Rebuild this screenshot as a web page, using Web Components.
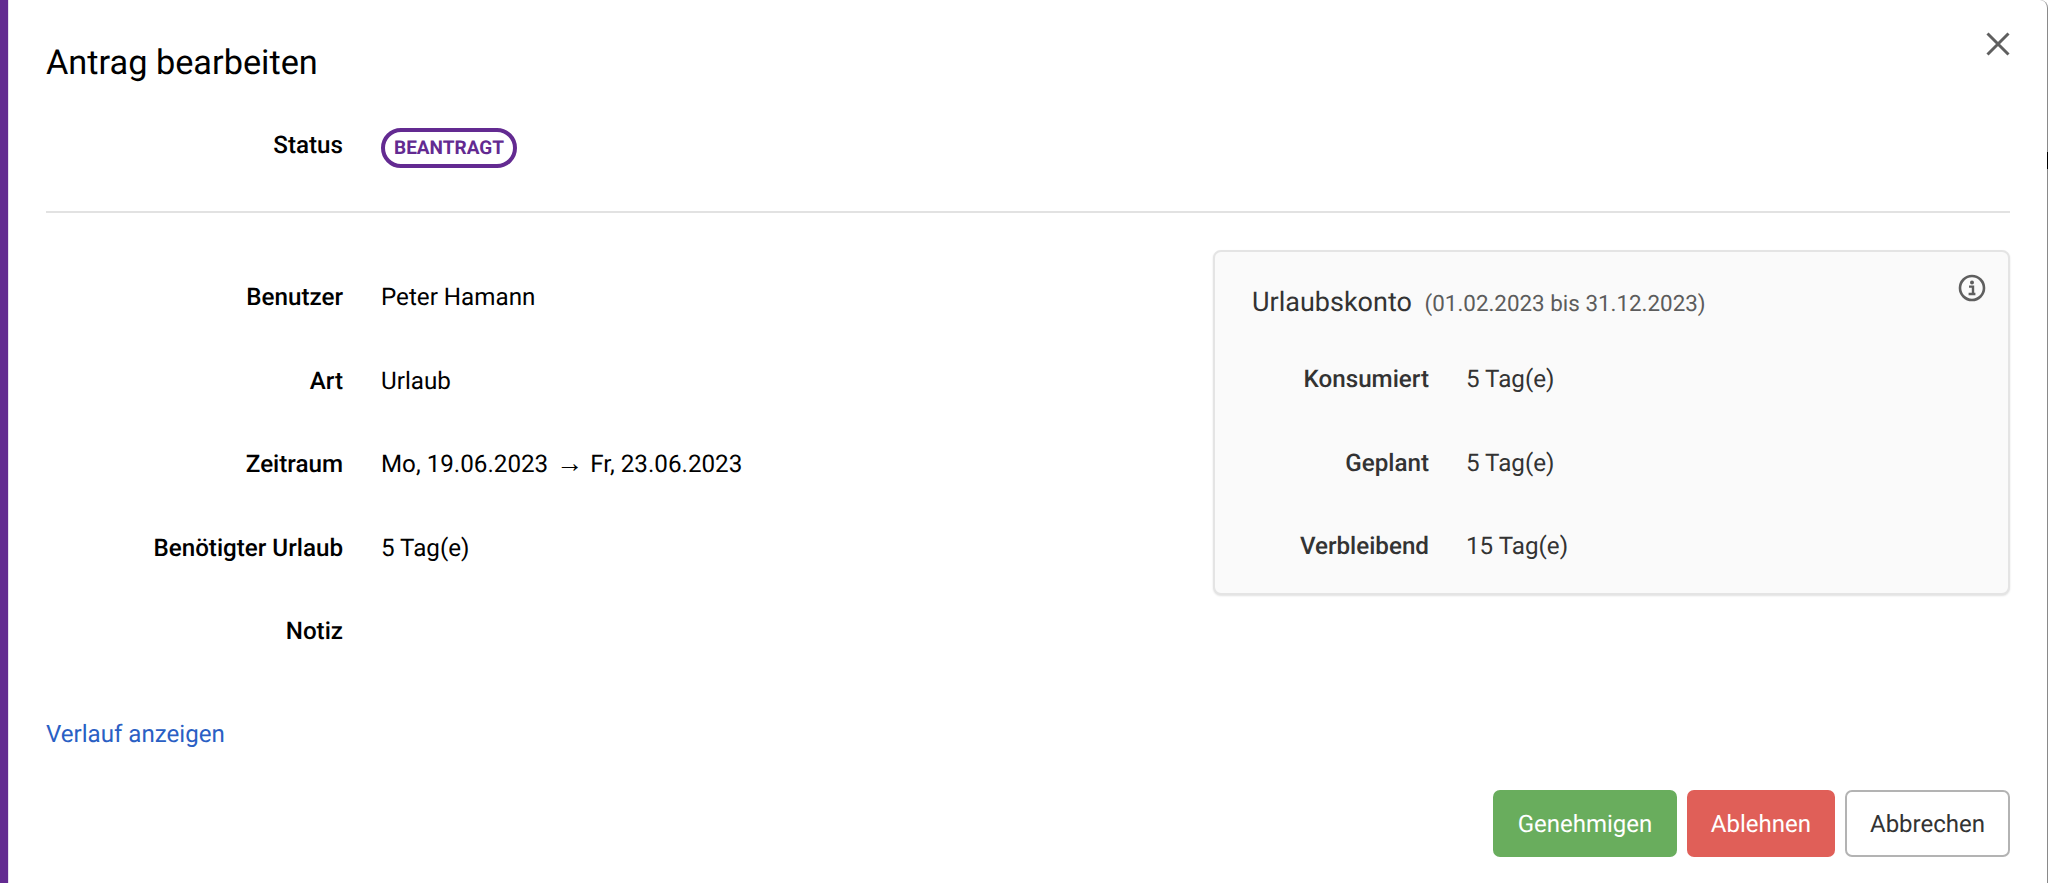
<!DOCTYPE html>
<html lang="de">
<head>
<meta charset="utf-8">
<title>Antrag bearbeiten</title>
<style>
  html, body { margin: 0; height: 100%; background: #fff; overflow: hidden; }
  body { font-family: Roboto, "Liberation Sans", sans-serif; text-rendering: geometricPrecision; }
  .arrow { font-family: "Liberation Sans", sans-serif; font-size: 27px; line-height: 1; margin: 0 1px 0 2px; }
</style>
</head>
<body>
<leave-dialog>
  <span slot="title">Antrag bearbeiten</span>
  <status-row slot="status"></status-row>
  <info-row label="Benutzer">Peter Hamann</info-row>
  <info-row label="Art">Urlaub</info-row>
  <info-row label="Zeitraum">Mo, 19.06.2023 <span class="arrow">→</span> Fr, 23.06.2023</info-row>
  <info-row label="Benötigter Urlaub">5 Tag(e)</info-row>
  <info-row label="Notiz"></info-row>
  <account-card slot="card"></account-card>
  <a slot="history" href="#">Verlauf anzeigen</a>
  <action-button slot="actions" kind="approve">Genehmigen</action-button>
  <action-button slot="actions" kind="reject">Ablehnen</action-button>
  <action-button slot="actions" kind="cancel">Abbrechen</action-button>
</leave-dialog>

<script>
class LeaveDialog extends HTMLElement {
  constructor() {
    super();
    this.attachShadow({ mode: 'open' });
    this.shadowRoot.innerHTML = `
      <style>
        :host {
          display: flex;
          flex-direction: column;
          position: relative;
          box-sizing: border-box;
          height: 883px;
          border-left: 8px solid #632a91;
          border-right: 1px solid #8a8a8a;
          border-top-right-radius: 8px;
          box-shadow: inset 1px 0 #e8dff0;
          padding: 0 37px 26px 38px;
          color: #000;
          font-size: 24px;
        }
        /* dark piece of the window behind, at the right edge */
        :host::after {
          content: "";
          position: absolute;
          top: 152px;
          right: -1px;
          width: 1px;
          height: 17px;
          background: #000;
        }
        .head {
          display: flex;
          justify-content: space-between;
          padding-top: 41px;
          height: 74px;
        }
        .title { font-size: 34.3px; line-height: 44px; }
        .close { margin-top: -9px; width: 24px; height: 24px; color: #5f5f5f; }
        .status { height: 96px; border-bottom: 2px solid #e2e2e2; }
        .body { display: flex; justify-content: space-between; padding-top: 37px; flex: 1; }
        .rows { display: flex; flex-direction: column; padding-top: 32px; }
        ::slotted(a) { color: #2a5fc4; text-decoration: none; font-size: 24.1px; }
        .foot { display: flex; align-items: flex-end; justify-content: space-between; }
        .history { margin-bottom: 109px; }
        .actions { display: flex; gap: 10px; }
      </style>
      <div class="head">
        <div class="title"><slot name="title"></slot></div>
        <svg class="close" viewBox="0 0 24 24" fill="none" stroke="currentColor" stroke-width="3"><path d="M1.5 1.5l21 21M22.5 1.5l-21 21"/></svg>
      </div>
      <div class="status"><slot name="status"></slot></div>
      <div class="body">
        <div class="rows"><slot></slot></div>
        <slot name="card"></slot>
      </div>
      <div class="foot">
        <div class="history"><slot name="history"></slot></div>
        <div class="actions"><slot name="actions"></slot></div>
      </div>
    `;
  }
}

class InfoRow extends HTMLElement {
  constructor() {
    super();
    this.attachShadow({ mode: 'open' });
    this.shadowRoot.innerHTML = `
      <style>
        :host { display: flex; height: 83.6px; line-height: 30px; font-size: 24.2px; }
        .label { width: 297px; margin-right: 38px; text-align: right; font-weight: 500; }
      </style>
      <div class="label"></div>
      <div class="value"><slot></slot></div>
    `;
    this.shadowRoot.querySelector('.label').textContent = this.getAttribute('label');
  }
}

class StatusRow extends HTMLElement {
  constructor() {
    super();
    this.attachShadow({ mode: 'open' });
    this.shadowRoot.innerHTML = `
      <style>
        :host { display: flex; align-items: center; height: 42px; margin-top: 12px; }
        .label { width: 297px; margin-right: 38px; margin-top: -6px; text-align: right; font-weight: 500; font-size: 24.2px; }
        .pill {
          display: inline-block;
          border: 4px solid #632a91;
          border-radius: 21px;
          color: #632a91;
          font-size: 19px;
          font-weight: 700;
          line-height: 32px;
          padding: 0 9px;
        }
      </style>
      <div class="label">Status</div>
      <span class="pill">BEANTRAGT</span>
    `;
  }
}

class AccountCard extends HTMLElement {
  constructor() {
    super();
    this.attachShadow({ mode: 'open' });
    this.shadowRoot.innerHTML = `
      <style>
        :host {
          display: block;
          position: relative;
          box-sizing: border-box;
          width: 797px;
          height: 345px;
          background: #fafafa;
          border: 2px solid #e4e4e4;
          border-radius: 8px;
          box-shadow: 0 1px 2px rgba(0,0,0,.12);
          padding: 30px 37px;
          color: #333;
          font-size: 24.2px;
        }
        .title { font-size: 27px; line-height: 40px; margin-bottom: 40px; }
        .range { font-size: 22.4px; color: #5c5c5c; margin-left: 6px; }
        svg { position: absolute; top: 22px; right: 22px; width: 28px; height: 28px; }
        .row { display: flex; height: 83.6px; line-height: 30px; }
        .row b { width: 177px; margin-right: 37px; text-align: right; font-weight: 500; }
      </style>
      <div class="title">Urlaubskonto <span class="range">(01.02.2023 bis 31.12.2023)</span></div>
      <svg viewBox="0 0 28 28" fill="none" stroke="#5f5f5f">
        <circle cx="14" cy="14" r="12" stroke-width="2.6"/>
        <circle cx="14" cy="8.6" r="2" fill="#5f5f5f" stroke="none"/>
        <path d="M11 12.6h4v7M10.6 20h6.8" stroke-width="2.4"/>
      </svg>
      <div class="row"><b>Konsumiert</b><span>5 Tag(e)</span></div>
      <div class="row"><b>Geplant</b><span>5 Tag(e)</span></div>
      <div class="row"><b>Verbleibend</b><span>15 Tag(e)</span></div>
    `;
  }
}

class ActionButton extends HTMLElement {
  constructor() {
    super();
    this.attachShadow({ mode: 'open' });
    this.shadowRoot.innerHTML = `
      <style>
        :host { display: inline-flex; align-items: center; box-sizing: border-box; height: 67px; padding: 0 24px; border-radius: 7px; font-size: 24px; }
        :host([kind="approve"]) { background: #69ad5d; color: #fff; padding: 0 24.5px; }
        :host([kind="reject"]) { background: #e05f58; color: #fff; }
        :host([kind="cancel"]) { background: #fff; color: #333; border: 2px solid #b3b3b3; padding: 0 23px; }
      </style>
      <slot></slot>
    `;
  }
}

customElements.define('leave-dialog', LeaveDialog);
customElements.define('info-row', InfoRow);
customElements.define('status-row', StatusRow);
customElements.define('account-card', AccountCard);
customElements.define('action-button', ActionButton);
</script>
</body>
</html>
